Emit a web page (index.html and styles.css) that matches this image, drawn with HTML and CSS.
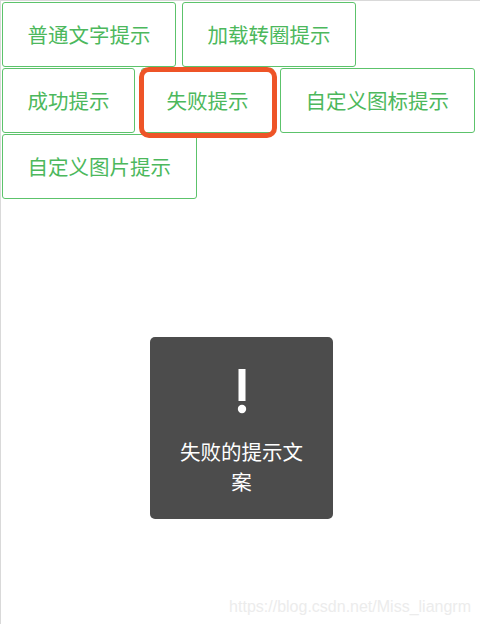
FILE: index.html
```html
<!DOCTYPE html>
<html lang="zh-CN">
<head>
<meta charset="utf-8">
<title>Toast 提示</title>
<link rel="stylesheet" href="styles.css">
</head>
<body>
<div class="page">
  <div class="btns">
    <button class="btn">普通文字提示</button>
    <button class="btn">加载转圈提示</button>
    <button class="btn">成功提示</button>
    <button class="btn">失败提示</button>
    <button class="btn">自定义图标提示</button>
    <button class="btn">自定义图片提示</button>
  </div>
  <div class="highlight"></div>
  <div class="toast">
    <svg class="toast-icon" width="10" height="46" viewBox="0 0 10 46">
      <rect x="1.5" y="0" width="7" height="32" fill="#fff"/>
      <circle cx="5" cy="40" r="4.2" fill="#fff"/>
    </svg>
    <div class="toast-text">失败的提示文案</div>
  </div>
  <div class="watermark">https://blog.csdn.net/Miss_liangrm</div>
</div>
</body>
</html>
```
FILE: styles.css
```css
html, body {
  margin: 0;
  padding: 0;
  background: #fff;
}
body {
  width: 480px;
  height: 624px;
  overflow: hidden;
  font-family: "Noto Sans CJK SC", "Noto Sans", sans-serif;
}
.page {
  position: relative;
  width: 479px;
  height: 623px;
  border-left: 1px solid #d9d9d9;
  border-top: 1px solid #d9d9d9;
}
.btns {
  display: flex;
  flex-wrap: wrap;
  column-gap: 6px;
  row-gap: 1px;
  padding: 1px 0 0 1px;
}
.btn {
  height: 65px;
  margin: 0;
  padding: 0 24.5px;
  border: 1px solid #5cc36b;
  border-radius: 3px;
  background: #fff;
  color: #4cb85c;
  font-family: "Noto Sans CJK SC", "Noto Sans", sans-serif;
  font-size: 20.5px;
  line-height: 1;
  white-space: nowrap;
}
.highlight {
  position: absolute;
  left: 138px;
  top: 66px;
  width: 128px;
  height: 61px;
  border: 5px solid #ee5427;
  border-radius: 10px;
}
.toast {
  position: absolute;
  left: 149px;
  top: 336px;
  width: 183px;
  height: 182px;
  box-sizing: border-box;
  padding: 32px 20px 0;
  background: #4c4c4c;
  border-radius: 5px;
  display: flex;
  flex-direction: column;
  align-items: center;
}
.toast-icon {
  display: block;
  margin-bottom: 21px;
}
.toast-text {
  color: #fff;
  font-size: 20.5px;
  line-height: 30px;
  text-align: center;
}
.watermark {
  position: absolute;
  right: 9px;
  bottom: 8px;
  color: #ececec;
  font-family: "Liberation Sans", Arial, sans-serif;
  font-size: 16px;
}
```
